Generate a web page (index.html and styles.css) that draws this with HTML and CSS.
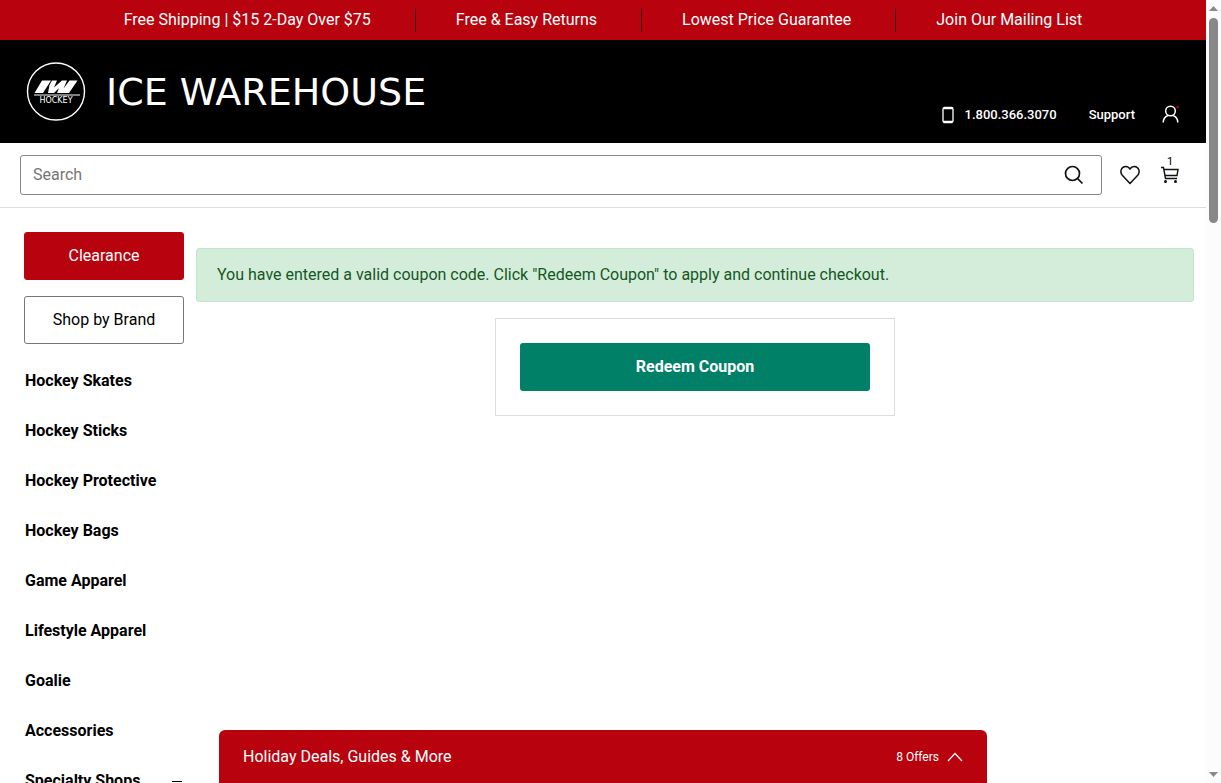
FILE: index.html
```html
<!DOCTYPE html>
<html lang="en">
<head>
<meta charset="utf-8">
<title>Ice Warehouse - Redeem Coupon</title>
<link rel="stylesheet" href="styles.css">
</head>
<body>
<div class="page">
  <ul class="promos">
    <li><a href="#">Free Shipping | $15 2-Day Over $75</a></li>
    <li><a href="#">Free &amp; Easy Returns</a></li>
    <li><a href="#">Lowest Price Guarantee</a></li>
    <li><a href="#">Join Our Mailing List</a></li>
  </ul>

  <header class="masthead">
    <a class="brand" href="#">
      <svg class="emblem" viewBox="0 0 60 60" aria-hidden="true">
        <circle cx="30" cy="30" r="28.500" fill="none" stroke="#fff" stroke-width="1.400"/>
        <path fill="#fff" d="M16 19h9l-8 12.500H8.500zM26 19h5l-3 7 8-7h5l-3.500 8 6-8h8l-8.500 12.500H31l2-5-5 5h-6l1.500-8z"/>
        <path stroke="#fff" stroke-width="1" d="M8 33.500h46"/>
        <text class="emblem-text" x="30" y="41" text-anchor="middle">HOCKEY</text>
      </svg>
      <span class="wordmark">ICE WAREHOUSE</span>
    </a>
    <nav class="account">
      <a class="phone" href="#">
        <svg width="12" height="18" viewBox="0 0 12 18" fill="none" aria-hidden="true"><rect x="1" y="1.500" width="10" height="15" rx="1.500" stroke="#fff" stroke-width="1.300"/><path d="M1 2.500h10M1 15.500h10" stroke="#fff" stroke-width="1.500"/></svg>
        1.800.366.3070
      </a>
      <a href="#">Support</a>
      <a class="user" href="#" aria-label="My account">
        <svg width="18" height="20" viewBox="0 0 18 20" fill="none" aria-hidden="true"><circle cx="8.500" cy="6" r="4.800" stroke="#fff" stroke-width="1.500"/><path d="M1.200 17.500c.2-4 2-6 4.700-7M15.800 17.500c-.2-4-2-6-4.700-7" stroke="#fff" stroke-width="1.500"/><circle cx="15.500" cy="2" r="1.300" fill="#b8020d"/></svg>
      </a>
    </nav>
  </header>

  <div class="toolbar">
    <form class="search">
      <input class="search-input" type="search" placeholder="Search" aria-label="Search">
      <button class="search-button" type="button" aria-label="Submit search">
        <svg width="20" height="20" viewBox="0 0 20 20" fill="none" stroke="#111" stroke-width="1.700" aria-hidden="true"><circle cx="8.500" cy="8.500" r="7"/><path d="M13.500 13.500l5 5"/></svg>
      </button>
    </form>
    <a class="tool" href="#" aria-label="Wish list">
      <svg width="20" height="20" viewBox="0 0 20 20" fill="none" stroke="#111" stroke-width="1.500" stroke-linejoin="round" aria-hidden="true"><path d="M10 18.500L2.300 10.300C-.7 6.700 1.500 1.500 5.600 1.500 7.800 1.500 9.200 2.700 10 4.200c.8-1.500 2.200-2.700 4.400-2.700 4.100 0 6.300 5.200 3.300 8.800z"/></svg>
    </a>
    <a class="tool" href="#" aria-label="Cart, 1 item">
      <svg width="20" height="18" viewBox="0 0 20 18" fill="none" stroke="#111" stroke-width="1.400" aria-hidden="true"><path d="M1 1.500h2.500L5.500 12.500H17M4 3.500h14L17 9.500H5"/><circle cx="5.500" cy="15.500" r=".8"/><circle cx="15.500" cy="15.500" r=".8"/></svg>
      <span class="cart-count">1</span>
    </a>
  </div>

  <div class="columns">
    <aside class="sidebar">
      <a class="side-button side-button-sale" href="#">Clearance</a>
      <a class="side-button" href="#">Shop by Brand</a>
      <ul class="categories">
        <li><a href="#">Hockey Skates</a></li>
        <li><a href="#">Hockey Sticks</a></li>
        <li><a href="#">Hockey Protective</a></li>
        <li><a href="#">Hockey Bags</a></li>
        <li><a href="#">Game Apparel</a></li>
        <li><a href="#">Lifestyle Apparel</a></li>
        <li><a href="#">Goalie</a></li>
        <li><a href="#">Accessories</a></li>
        <li><a href="#">Specialty Shops</a><span class="collapse"></span></li>
      </ul>
    </aside>
    <main class="content">
      <p class="notice">You have entered a valid coupon code. Click "Redeem Coupon" to apply and continue checkout.</p>
      <form class="coupon">
        <button class="redeem" type="button">Redeem Coupon</button>
      </form>
    </main>
  </div>

  <button class="deals" type="button">
    <span>Holiday Deals, Guides &amp; More</span>
    <span class="offers">8 Offers
      <svg width="16" height="10" viewBox="0 0 16 10" fill="none" stroke="#fff" stroke-width="1.200" aria-hidden="true"><path d="M1 9l7-7.500L15 9"/></svg>
    </span>
  </button>
</div>

<div class="scrollbar" aria-hidden="true">
  <svg width="9" height="5" viewBox="0 0 9 5"><path fill="#888" d="M4.500 0L9 5H0z"/></svg>
  <span class="thumb"></span>
  <svg width="9" height="5" viewBox="0 0 9 5"><path fill="#888" d="M4.500 5L9 0H0z"/></svg>
</div>
</body>
</html>
```
FILE: styles.css
```css
* { box-sizing: border-box; }

body {
  margin: 0;
  display: flex;
  height: 100vh;
  overflow: hidden;
  background: #fff;
  color: #000;
  font: 16px/24px Roboto, "Liberation Sans", sans-serif;
}

a { color: inherit; text-decoration: none; }
ul { list-style: none; margin: 0; padding: 0; }
svg { display: block; flex: none; }
button, input { font: inherit; }

.page {
  position: relative;
  flex: 1;
  min-width: 0;
  overflow: hidden;
}

.promos {
  display: flex;
  justify-content: center;
  align-items: center;
  gap: 44px;
  height: 40px;
  background: #b8020d;
  color: #fff;
}
.promos li + li {
  border-left: 1px solid #3c0508;
  padding-left: 40px;
}

.masthead {
  display: flex;
  justify-content: space-between;
  padding: 21px 26px;
  background: #000;
  color: #fff;
}
.brand {
  display: flex;
  align-items: center;
  gap: 20px;
}
.emblem { width: 60px; height: 61px; }
.emblem-text {
  fill: #fff;
  font: 8px "DejaVu Sans", sans-serif;
}
.wordmark {
  font: 38px/40px "DejaVu Sans", sans-serif;
  white-space: nowrap;
}
.account {
  display: flex;
  align-items: center;
  align-self: flex-end;
  gap: 32px;
  margin-bottom: -3px;
  font-size: 13px;
  font-weight: 500;
  line-height: 20px;
}
.user { margin-left: -5px; }
.phone { display: flex; align-items: center; gap: 11px; }

.toolbar {
  display: flex;
  align-items: center;
  gap: 20px;
  padding: 12px 26px 12px 20px;
  border-bottom: 1px solid #ddd;
}
.search {
  flex: 1;
  display: flex;
  align-items: center;
  height: 40px;
  margin-right: -2px;
  border: 1px solid #888;
  border-radius: 3px;
}
.search-input {
  flex: 1;
  min-width: 0;
  border: 0;
  padding: 0 12px;
  background: none;
  outline: none;
}
.search-input::placeholder { color: #757575; }
.search-button {
  border: 0;
  padding: 8px 17px;
  background: none;
}
.tool { position: relative; }
.cart-count {
  position: absolute;
  top: -11px;
  left: 0;
  width: 100%;
  text-align: center;
  font-size: 11px;
  line-height: 14px;
}

.columns {
  display: flex;
  gap: 12px;
  padding: 24px 12px 0 24px;
}
.sidebar { flex: none; width: 160px; }
.side-button {
  display: block;
  margin-bottom: 16px;
  padding: 11px;
  border: 1px solid #777;
  border-radius: 3px;
  text-align: center;
}
.side-button-sale {
  border-color: #b8020d;
  background: #b8020d;
  color: #fff;
}
.categories { margin-top: -4px; font-weight: 700; }
.categories li {
  display: flex;
  justify-content: space-between;
  align-items: center;
  height: 50px;
  padding: 0 2px 0 1px;
}
.collapse { width: 10px; height: 1px; background: #000; }

.content { flex: 1; min-width: 0; padding-top: 16px; }
.notice {
  margin: 0 0 16px;
  padding: 14px 20px;
  border: 1px solid #c3e6cb;
  border-radius: 3px;
  background: #d4edda;
  color: #155724;
}
.coupon {
  max-width: 400px;
  margin: 0 auto;
  padding: 24px;
  border: 1px solid #ddd;
}
.redeem {
  display: block;
  width: 100%;
  padding: 12px;
  border: 0;
  border-radius: 3px;
  background: #008066;
  color: #fff;
  font-weight: 700;
}

.deals {
  position: absolute;
  bottom: 0;
  left: 0;
  right: 0;
  display: flex;
  justify-content: space-between;
  align-items: center;
  width: 768px;
  max-width: 100%;
  margin: 0 auto;
  padding: 15px 24px 14px;
  border: 0;
  border-radius: 6px 6px 0 0;
  background: #b8020d;
  color: #fff;
}
.offers {
  display: flex;
  align-items: center;
  gap: 8px;
  font-size: 12px;
}

.scrollbar {
  flex: none;
  display: flex;
  flex-direction: column;
  align-items: center;
  width: 15px;
  padding: 6px 0;
  background: #fcfcfc;
}
.thumb {
  width: 9px;
  height: 205px;
  margin: 7px 0 auto;
  border-radius: 5px;
  background: #888;
}
```
